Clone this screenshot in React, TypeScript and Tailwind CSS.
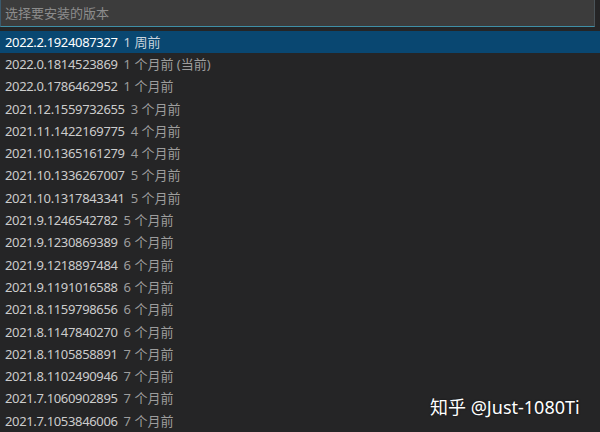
import React from "react";

const rows: [string, string][] = [
  ["2022.2.1924087327", "1 周前"],
  ["2022.0.1814523869", "1 个月前 (当前)"],
  ["2022.0.1786462952", "1 个月前"],
  ["2021.12.1559732655", "3 个月前"],
  ["2021.11.1422169775", "4 个月前"],
  ["2021.10.1365161279", "4 个月前"],
  ["2021.10.1336267007", "5 个月前"],
  ["2021.10.1317843341", "5 个月前"],
  ["2021.9.1246542782", "5 个月前"],
  ["2021.9.1230869389", "6 个月前"],
  ["2021.9.1218897484", "6 个月前"],
  ["2021.9.1191016588", "6 个月前"],
  ["2021.8.1159798656", "6 个月前"],
  ["2021.8.1147840270", "6 个月前"],
  ["2021.8.1105858891", "7 个月前"],
  ["2021.8.1102490946", "7 个月前"],
  ["2021.7.1060902895", "7 个月前"],
  ["2021.7.1053846006", "7 个月前"],
];

export default function App() {
  return (
    <div
      className="relative w-[600px] h-[432px] overflow-hidden bg-[#252526]"
      style={{ fontFamily: '"Noto Sans", "Noto Sans CJK SC", sans-serif' }}
    >
      <div className="h-[31px] bg-[#252526] pr-[5px]">
        <div className="h-[27px] bg-[#3c3c3c] border-l border-r border-b border-l-[#3a5a6e] border-r-[#4a5358] border-b-[#3f8fa6] flex items-center pl-[4px] pt-[2px] text-[13px] text-[#8c8c8c]">
          选择要安装的版本
        </div>
      </div>
      <div className="flex flex-col">
        {rows.map(([v, d], i) => (
          <div
            key={i}
            className={`h-[22.3px] shrink-0 flex items-center pl-[5px] text-[13px] leading-none ${
              i === 0 ? "bg-[#094771]" : ""
            }`}
          >
            <span className={`tracking-[-0.35px] ${i === 0 ? "text-white" : "text-[#cccccc]"}`}>{v}</span>
            <span className={`ml-[6px] ${i === 0 ? "text-[#c8d4de]" : "text-[#9d9d9d]"}`}>{d}</span>
          </div>
        ))}
      </div>
      <div className="absolute left-[430px] top-[395px] text-[18px] leading-[24px] text-white [text-shadow:0_0_2px_rgba(0,0,0,0.6)]">
        知乎 @Just-1080Ti
      </div>
    </div>
  );
}
